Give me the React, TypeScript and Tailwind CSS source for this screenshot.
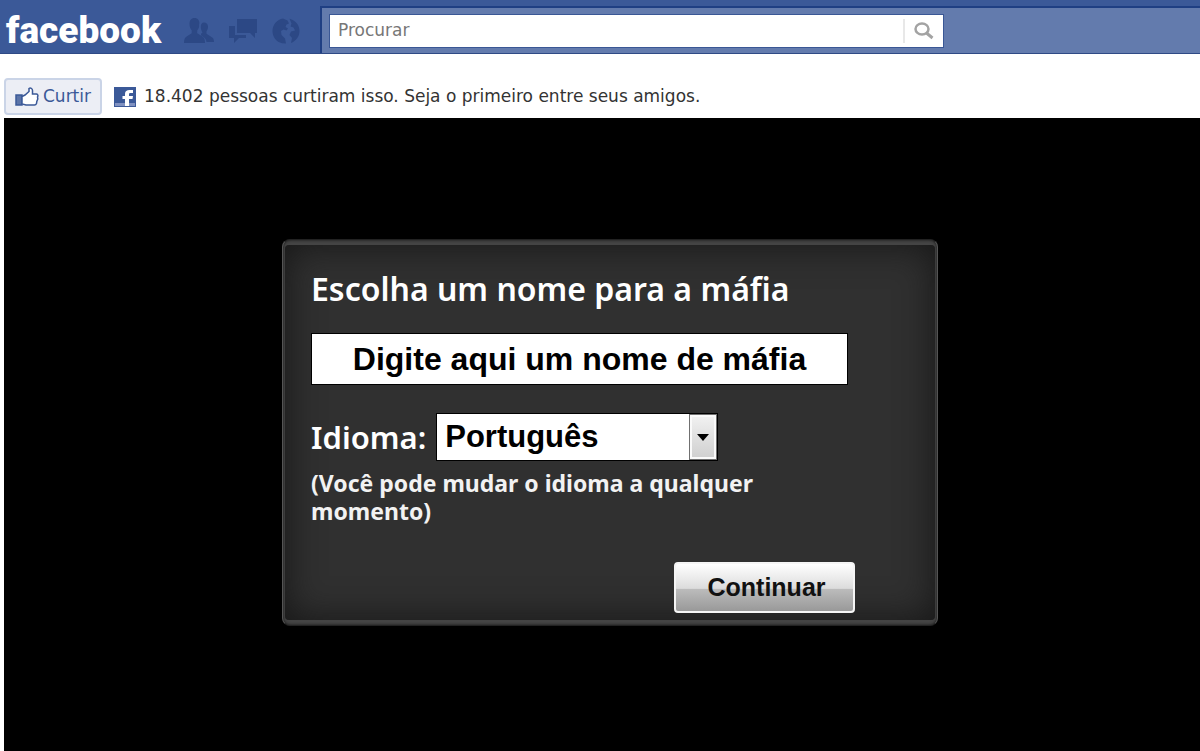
import React, { useState } from 'react';

const PeopleIcon = () => (
  <svg width="30" height="26" viewBox="0 0 30 26" fill="currentColor" aria-hidden="true">
    <path d="M20 4.500c2.600 0 4 1.700 4 4.300 0 1.900-.6 3.300-1.500 4.500v2.500l5 3.200c1.700 1 2.500 2.300 2.500 5h-7.500c-.3-2.200-1.300-3.800-3-5L17 17.300v-1.500l1.500-1.300c-.9-1.300-1.700-3.500-1.700-5.700 0-2.600 1-4.300 3.200-4.300z" />
    <path d="M10.500 0c3.400 0 5 2.400 5 6 0 2.600-.8 4.800-2.200 6.200v3l4.700 3c2.200 1.400 3 2.800 3 6.800H0c0-4 1-5.600 3-6.800l4.700-3v-3C6.300 10.800 5.500 8.600 5.500 6c0-3.600 1.600-6 5-6z" />
    <path d="M15.800 5.500c.3 4-.3 6.500-1.800 8.500v1.200" fill="none" stroke="#3b5998" strokeWidth="1" />
  </svg>
);

const MessagesIcon = () => (
  <svg width="30" height="26" viewBox="0 0 30 26" fill="currentColor" aria-hidden="true">
    <path d="M9 1h20v14h-2v5l-5-5H9z" />
    <path d="M1 8h6v9h11v3H11l-5 5v-5H1z" />
  </svg>
);

const GlobeIcon = () => (
  <svg width="28" height="26" viewBox="0 0 28 26" fill="currentColor" aria-hidden="true">
    <path d="M11 .5C5 1.500.5 6.500.5 13c0 6 4 11 9.500 12.200l4 .3-1-5-3.500-3.500-.5-4 2.500-1.500 3 1 1.500-2-2.500-1.500 1-2.500 2.500-1-1.500-3z" />
    <path d="M17.500.8c6 1.500 10 6.200 10 12.200 0 5.500-3.500 10-8.500 12l1-5-2.500-3 1.500-3.500 4-1-1.500-3-3-1 1-3z" />
  </svg>
);

const SearchIcon = () => (
  <svg width="20" height="18" viewBox="0 0 20 18" fill="none" stroke="#a3a3a3" aria-hidden="true">
    <ellipse cx="8" cy="7" rx="6.500" ry="5.500" strokeWidth="2.500" />
    <path d="M12.500 11L18.500 16" strokeWidth="3" />
  </svg>
);

const ThumbIcon = () => (
  <svg width="24" height="20" viewBox="0 0 24 20" aria-hidden="true">
    <path d="M1 8h6v10H1z" fill="#5b74a8" stroke="#3b5998" strokeWidth="1.500" />
    <path
      d="M7 9.500l3-1.500 4-3.500V1.500c1.500-1 3.500 0 3.500 2v3.500h4c1.500.3 1.700 1.800 1 3l.3 2-1 2.500-.3 2c-.4 1-1 1.500-2 1.500H11L7 17z"
      fill="#fff"
      stroke="#3b5998"
      strokeWidth="1.500"
    />
  </svg>
);

const FacebookBadge = () => (
  <svg width="22" height="20" viewBox="0 0 22 20" aria-hidden="true">
    <rect width="22" height="20" fill="#3b5998" />
    <rect x="1" y="16" width="20" height="3" fill="#8091c0" />
    <path d="M11 19v-7H8.500V9H11V7c0-3 1.800-4 4.500-4H19v3h-2.500c-1 0-1.500.4-1.500 1.300V9h4l-.5 3H15v7z" fill="#fff" />
  </svg>
);

const TopBar = () => (
  <header className="flex h-[54px] border-b border-[#2f4a85] bg-[#3b5998]">
    <div className="flex w-80 shrink-0 items-center pt-2 pl-1.5">
      <a href="#" className="font-[Roboto] text-[37px] font-black text-white">facebook</a>
      <nav className="ml-auto flex items-center gap-3.5 pr-5 text-[#2c4885]">
        <a href="#" aria-label="Amigos"><PeopleIcon /></a>
        <a href="#" aria-label="Mensagens"><MessagesIcon /></a>
        <a href="#" aria-label="Notificações"><GlobeIcon /></a>
      </nav>
    </div>
    <div className="mt-1.5 flex flex-1 items-start border-t-2 border-l-2 border-[#1f3f83] bg-[#637bad] pt-1.5 pl-[7px]">
      <form className="flex h-[34px] w-[615px] items-center border border-[#3a5795] bg-white" onSubmit={(e) => e.preventDefault()}>
        <input
          type="text"
          aria-label="Procurar"
          placeholder="Procurar"
          className="min-w-0 flex-1 bg-transparent px-2 font-['DejaVu_Sans'] text-[17px] text-black outline-none placeholder:text-[#777777]"
        />
        <button type="submit" aria-label="Pesquisar" className="flex h-6 w-10 items-center justify-center border-l-2 border-[#e8e8e8]">
          <SearchIcon />
        </button>
      </form>
    </div>
  </header>
);

const LikeBar = () => (
  <div className="flex items-center gap-3 pt-6 pb-[3px] pl-1 font-['DejaVu_Sans'] text-[17px]">
    <button className="flex h-[37px] w-[98px] items-center justify-center gap-1 rounded-sm border-2 border-[#cad4e7] bg-[#eceef5] text-[#3b5998]">
      <ThumbIcon />
      Curtir
    </button>
    <FacebookBadge />
    <p className="-ml-1 text-[#333333]">18.402 pessoas curtiram isso. Seja o primeiro entre seus amigos.</p>
  </div>
);

const MafiaForm = () => {
  const [name, setName] = useState('Digite aqui um nome de máfia');
  const [language, setLanguage] = useState('Português');

  return (
    <form
      className="w-[656px] rounded-lg border border-x-[#555555] border-y-[#222222] bg-[#444444] px-0.5 py-[5px] shadow-[inset_0_0_3px_#111111]"
      onSubmit={(e) => e.preventDefault()}
    >
      <div className="rounded-sm bg-[#303030] pt-6 pr-20 pb-[7px] pl-[26px] shadow-[inset_0_0_36px_#161616]">
        <label htmlFor="mafia-name" className="block font-['Noto_Sans'] text-[32px] leading-10 font-semibold text-white">
          Escolha um nome para a máfia
        </label>
        <input
          id="mafia-name"
          type="text"
          value={name}
          onChange={(e) => setName(e.target.value)}
          className="mt-6 block h-[52px] w-[537px] border border-black bg-white text-center font-['Liberation_Sans'] text-[32px] font-bold text-black outline-none"
        />
        <div className="mt-7 flex items-center gap-2.5">
          <label htmlFor="language" className="font-['Noto_Sans'] text-[31px] leading-10 font-semibold text-white">Idioma:</label>
          <div className="relative">
            <select
              id="language"
              value={language}
              onChange={(e) => setLanguage(e.target.value)}
              className="block h-12 w-[282px] appearance-none border border-black bg-white pl-2 font-['Liberation_Sans'] text-[31px] font-bold text-black outline-none"
            >
              <option>Português</option>
              <option>English</option>
              <option>Español</option>
            </select>
            <span className="pointer-events-none absolute inset-y-px right-px flex w-7 items-center justify-center border border-[#707070] bg-linear-to-b from-[#f2f2f2] to-[#cfcfcf] shadow-[inset_0_0_0_2px_#fafafa]">
              <svg width="12" height="7" viewBox="0 0 12 7" aria-hidden="true">
                <path d="M0 0h12L6 7z" fill="#000" />
              </svg>
            </span>
          </div>
        </div>
        <p className="mt-2 max-w-[480px] font-['Noto_Sans'] text-[23px] leading-7 font-bold text-[#f2f2f2]">
          (Você pode mudar o idioma a qualquer momento)
        </p>
        <div className="mt-[37px] flex justify-end">
          <button
            type="submit"
            className="h-[51px] w-[181px] rounded-sm border-2 border-[#f5f5f5] bg-[linear-gradient(to_bottom,#ffffff_0%,#dcdcdc_52%,#bcbcbc_53%,#999999_100%)] pl-1 font-['Liberation_Sans'] text-[25px] font-bold text-[#111111]"
          >
            Continuar
          </button>
        </div>
      </div>
    </form>
  );
};

export default function App() {
  return (
    <div className="flex min-h-screen flex-col bg-white">
      <TopBar />
      <LikeBar />
      <main className="ml-1 flex flex-1 items-center justify-center bg-black pb-1 pl-4">
        <MafiaForm />
      </main>
    </div>
  );
}
